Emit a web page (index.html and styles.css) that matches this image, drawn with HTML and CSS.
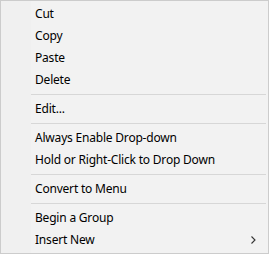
FILE: index.html
```html
<!DOCTYPE html>
<html lang="en">
<head>
  <meta charset="UTF-8">
  <title>Context Menu</title>
  <link rel="stylesheet" href="styles.css">
</head>
<body>
  <div class="menu">
    <div class="item">Cut</div>
    <div class="item">Copy</div>
    <div class="item">Paste</div>
    <div class="item">Delete</div>
    <div class="sep"></div>
    <div class="item">Edit...</div>
    <div class="sep"></div>
    <div class="item">Always Enable Drop-down</div>
    <div class="item">Hold or Right-Click to Drop Down</div>
    <div class="sep"></div>
    <div class="item">Convert to Menu</div>
    <div class="sep"></div>
    <div class="item">Begin a Group</div>
    <div class="item">
      <span>Insert New</span>
      <svg class="arrow" width="5" height="8" viewBox="0 0 5 8">
        <path d="M0.5 0.5 L4 4 L0.5 7.5" fill="none" stroke="#333" stroke-width="1.1"/>
      </svg>
    </div>
  </div>
</body>
</html>
```

FILE: styles.css
```css
html, body {
  margin: 0;
  padding: 0;
}
.menu {
  width: 267px;
  height: 248px;
  padding: 2px 0;
  border: 1px solid #cccccc;
  background: linear-gradient(to right, #f0f0f0 30px, #f2f2f2 30px);
  font-family: "Noto Sans", sans-serif;
  font-size: 12px;
  letter-spacing: -0.2px;
  color: #000;
}
.item {
  height: 22px;
  display: flex;
  align-items: center;
  justify-content: space-between;
  padding: 0 12px 1px 34px;
  box-sizing: border-box;
}
.sep {
  height: 1px;
  margin: 3px 2px 3px 30px;
  background: #d7d7d7;
}
.arrow {
  display: block;
}
```
